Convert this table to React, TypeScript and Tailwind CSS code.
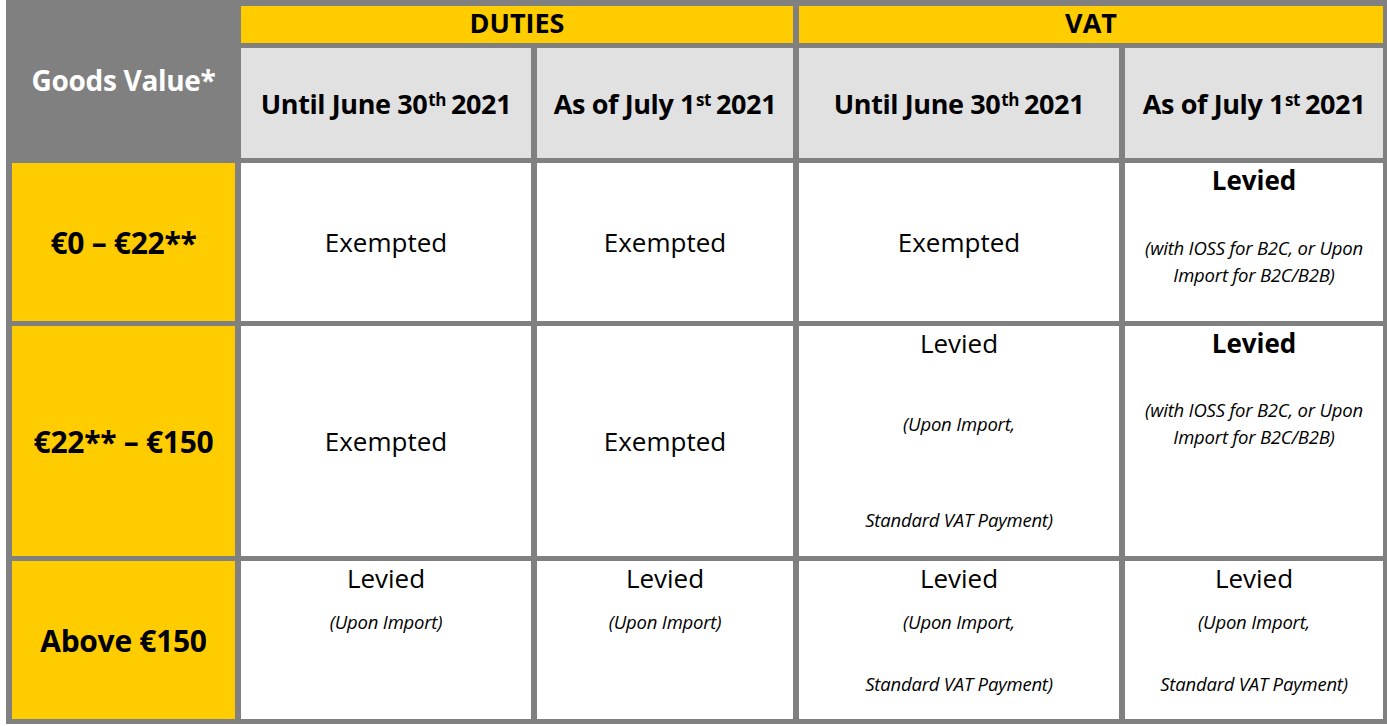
const FONT = "font-['Open_Sans',sans-serif]";

function Sup({ children }: { children: string }) {
  return <sup className="text-[17px] relative -top-[8px] ml-[1px] mr-[5px]">{children}</sup>;
}

function DateHead({ kind }: { kind: "until" | "asof" }) {
  return (
    <div className="bg-[#e1e1e1] flex items-center justify-center text-[27px] font-bold text-black tracking-[-0.4px] pt-[2px]">
      {kind === "until" ? (
        <span>
          Until June 30<Sup>th</Sup>2021
        </span>
      ) : (
        <span>
          As of July 1<Sup>st</Sup>2021
        </span>
      )}
    </div>
  );
}

function RowHead({ label }: { label: string }) {
  return (
    <div className="bg-[#ffcc00] flex items-center justify-center text-[30px] font-bold text-black tracking-[-0.3px]">
      {label}
    </div>
  );
}

function Plain({ text }: { text: string }) {
  return (
    <div className="bg-white flex items-center justify-center text-[26px] text-black">{text}</div>
  );
}

// cell with a "Levied" heading on top and italic notes placed at given offsets
function Levied({
  bold,
  notes,
}: {
  bold?: boolean;
  notes: { text: string[]; mt: string }[];
}) {
  return (
    <div className="bg-white flex flex-col items-center text-black">
      <div className={`text-[26px] leading-[34px] ${bold ? "font-bold" : ""}`}>Levied</div>
      {notes.map((n, i) => (
        <div
          key={i}
          className={`italic text-[18.5px] leading-[27px] text-center tracking-[-0.2px] ${n.mt}`}
        >
          {n.text.map((t) => (
            <div key={t}>{t}</div>
          ))}
        </div>
      ))}
    </div>
  );
}

export default function App() {
  return (
    <div className={`w-[1387px] h-[726px] bg-white ${FONT}`}>
      <div className="ml-[6px] w-[1381px] bg-[#808080] pt-[6px] pl-[6px] pb-[5px] grid grid-cols-[223px_290px_256px_320px_258px] grid-rows-[37px_110px_158px_230px_158px] gap-x-[6px] gap-y-[5px]">
        {/* header */}
        <div className="row-span-2 flex items-center justify-center text-white text-[28px] font-bold tracking-[-0.3px] pb-[4px]">
          Goods Value*
        </div>
        <div className="col-span-2 bg-[#ffcc00] flex items-center justify-center text-[27px] font-bold text-black pb-[2px]">
          DUTIES
        </div>
        <div className="col-span-2 bg-[#ffcc00] flex items-center justify-center text-[27px] font-bold text-black pb-[2px]">
          VAT
        </div>
        <DateHead kind="until" />
        <DateHead kind="asof" />
        <DateHead kind="until" />
        <DateHead kind="asof" />

        {/* €0 – €22 */}
        <RowHead label="€0 – €22**" />
        <Plain text="Exempted" />
        <Plain text="Exempted" />
        <Plain text="Exempted" />
        <Levied
          bold
          notes={[{ text: ["(with IOSS for B2C, or Upon", "Import for B2C/B2B)"], mt: "mt-[37px]" }]}
        />

        {/* €22 – €150 */}
        <RowHead label="€22** – €150" />
        <Plain text="Exempted" />
        <Plain text="Exempted" />
        <Levied
          notes={[
            { text: ["(Upon Import,"], mt: "mt-[50px]" },
            { text: ["Standard VAT Payment)"], mt: "mt-[69px]" },
          ]}
        />
        <Levied
          bold
          notes={[{ text: ["(with IOSS for B2C, or Upon", "Import for B2C/B2B)"], mt: "mt-[36px]" }]}
        />

        {/* above €150 */}
        <RowHead label="Above €150" />
        <Levied notes={[{ text: ["(Upon Import)"], mt: "mt-[13px]" }]} />
        <Levied notes={[{ text: ["(Upon Import)"], mt: "mt-[13px]" }]} />
        <Levied
          notes={[
            { text: ["(Upon Import,"], mt: "mt-[13px]" },
            { text: ["Standard VAT Payment)"], mt: "mt-[35px]" },
          ]}
        />
        <Levied
          notes={[
            { text: ["(Upon Import,"], mt: "mt-[13px]" },
            { text: ["Standard VAT Payment)"], mt: "mt-[35px]" },
          ]}
        />
      </div>
    </div>
  );
}
